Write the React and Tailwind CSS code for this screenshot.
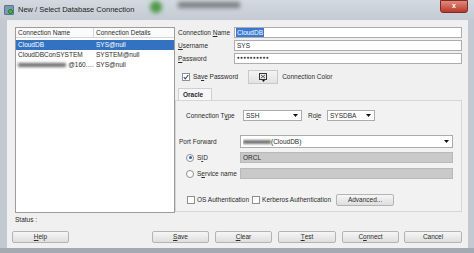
import React from "react";

const Btn = ({ children, className = "" }) => (
  <div
    className={`h-[12px] flex items-center justify-center border border-[#b4b4b4] rounded-[2px] bg-gradient-to-b from-[#f6f6f6] to-[#dedede] ${className}`}
  >
    {children}
  </div>
);

const Combo = ({ children, className = "" }) => (
  <div
    className={`flex items-center border border-[#a9abb0] bg-white pl-[2px] pr-[3px] ${className}`}
  >
    <span className="flex-1 truncate">{children}</span>
    <svg width="5" height="3" viewBox="0 0 5 3">
      <path d="M0 0h5L2.5 3z" fill="#111" />
    </svg>
  </div>
);

const Check = ({ checked }) => (
  <div className="w-[8px] h-[8px] border border-[#8f8f8f] bg-white flex items-center justify-center shrink-0">
    {checked && (
      <svg width="6" height="6" viewBox="0 0 6 6">
        <path d="M0.8 3.2L2.3 4.8L5.2 1" stroke="#2c4f86" strokeWidth="1.1" fill="none" />
      </svg>
    )}
  </div>
);

const Radio = ({ checked }) => (
  <div className="w-[8px] h-[8px] rounded-full border border-[#8f8f8f] bg-white flex items-center justify-center shrink-0">
    {checked && <div className="w-[3px] h-[3px] rounded-full bg-[#2f63b8]" />}
  </div>
);

export default function App() {
  return (
    <div
      className="w-[474px] h-[253px] bg-[#c2c9d1] flex flex-col overflow-hidden text-[6.5px] text-[#2b2b2b]"
      style={{ fontFamily: '"Liberation Sans", Arial, sans-serif' }}
    >
      {/* Title bar */}
      <div className="relative h-[20px] shrink-0 flex items-center bg-gradient-to-b from-[#d3d9e0] to-[#c4cbd3]">
        <div className="ml-[4px] w-[10px] h-[10px] rounded-[1px] bg-[#7d97b3] border border-[#5b7490] flex items-end justify-end">
          <div className="w-[5px] h-[5px] rounded-full bg-[#3bbf3b] border border-[#1d7a1d]" />
        </div>
        <span className="ml-[4px] text-[7.5px] text-[#1e1e1e]">New / Select Database Connection</span>
        <div className="absolute left-[150px] top-[1px] w-[12px] h-[12px] rounded-full bg-[#4f9a4a] blur-[2px]" />
        <div className="absolute left-[178px] top-[2px] w-[62px] h-[6px] bg-[#55595e] blur-[2px] opacity-70" />
        <div className="absolute right-[6px] top-0 w-[28px] h-[13px] rounded-b-[3px] bg-gradient-to-b from-[#e08a7e] to-[#b9362a] border border-[#7e2b24] flex items-center justify-center text-white text-[7px] font-bold">
          x
        </div>
      </div>

      {/* Client area */}
      <div className="ml-[7px] mr-[6px] h-[228px] bg-[#f0f0f0] flex flex-col pt-[7px]">
        <div className="flex h-[186px]">
          {/* Connection list */}
          <div className="ml-[8px] w-[160px] h-[186px] bg-white border border-[#9c9c9c] flex flex-col">
            <div className="flex h-[10px] border-b border-[#d5d5d5] bg-[#fbfbfb]">
              <div className="w-[78px] pl-[2px] border-r border-[#d5d5d5] flex items-center">Connection Name</div>
              <div className="flex-1 pl-[2px] flex items-center">Connection Details</div>
            </div>
            <div className="flex h-[10px] mt-[2px] bg-[#3371c1] text-white">
              <div className="w-[78px] pl-[2px] flex items-center">CloudDB</div>
              <div className="flex-1 pl-[2px] flex items-center">SYS@null</div>
            </div>
            <div className="flex h-[10px]">
              <div className="w-[78px] pl-[2px] flex items-center">CloudDBConSYSTEM</div>
              <div className="flex-1 pl-[2px] flex items-center">SYSTEM@null</div>
            </div>
            <div className="flex h-[10px]">
              <div className="w-[78px] pl-[2px] flex items-center">
                <span className="w-[49px] h-[4px] bg-[#6b6b6b] blur-[1.5px] mr-[2px]" />
                @160.…
              </div>
              <div className="flex-1 pl-[2px] flex items-center">SYS@null</div>
            </div>
          </div>

          {/* Details */}
          <div className="w-[287px] flex flex-col">
            <div className="flex items-center h-[11px]">
              <span className="pl-[3px] w-[59px]">Connection <u>N</u>ame</span>
              <div className="w-[228px] h-[11px] border border-[#abadb3] bg-white flex items-center pl-[1px]">
                <span className="bg-[#3a79d0] text-white px-[1px]">CloudDB</span>
              </div>
            </div>
            <div className="flex items-center h-[11px] mt-[2px]">
              <span className="pl-[3px] w-[59px]"><u>U</u>sername</span>
              <div className="w-[228px] h-[11px] border border-[#abadb3] bg-white flex items-center pl-[2px]">SYS</div>
            </div>
            <div className="flex items-center h-[11px] mt-[2px]">
              <span className="pl-[3px] w-[59px]"><u>P</u>assword</span>
              <div className="w-[228px] h-[11px] border border-[#abadb3] bg-white flex items-center pl-[2px] text-[4.5px] tracking-[0.5px]">
                ●●●●●●●●●●
              </div>
            </div>
            <div className="flex items-center h-[14px] mt-[6px]">
              <div className="ml-[7px]"><Check checked /></div>
              <span className="ml-[3px]">Sa<u>v</u>e Password</span>
              <div className="ml-[10px] w-[30px] h-[14px] border border-[#c9c9c9] bg-gradient-to-b from-[#f4f4f4] to-[#e2e2e2] flex items-center justify-center">
                <svg width="8" height="9" viewBox="0 0 8 9">
                  <rect x="0.5" y="0.5" width="7" height="6" fill="none" stroke="#333" />
                  <path d="M2 2l4 3M6 2l-4 3" stroke="#333" strokeWidth="0.8" />
                  <path d="M3 7h3l-1.5 2z" fill="#111" />
                </svg>
              </div>
              <span className="ml-[4px]">Connection Color</span>
            </div>

            {/* Tab */}
            <div className="mt-[4px] flex">
              <div className="ml-[3px] w-[34px] h-[12px] border border-b-0 border-[#cfcfcf] bg-[#f7f7f7] flex items-center pl-[4px] font-bold">
                Oracle
              </div>
            </div>
            <div className="h-[112px] border border-[#d6d6d6] bg-[#f2f2f2] flex flex-col">
              <div className="flex items-center h-[11px] mt-[9px]">
                <span className="ml-[10px] w-[57px]">Connection T<u>y</u>pe</span>
                <Combo className="w-[59px] h-[11px]">SSH</Combo>
                <span className="ml-[6px] w-[19px]">Ro<u>l</u>e</span>
                <Combo className="w-[48px] h-[11px]">SYSDBA</Combo>
              </div>
              <div className="flex items-center h-[13px] mt-[14px]">
                <span className="ml-[3px] w-[61px]">Port Forward</span>
                <Combo className="w-[213px] h-[13px]">
                  <span className="inline-block w-[28px] h-[4px] bg-[#777] blur-[1px] align-middle" />
                  (CloudDB)
                </Combo>
              </div>
              <div className="flex items-center h-[11px] mt-[4px]">
                <div className="ml-[10px]"><Radio checked /></div>
                <span className="ml-[3px] w-[43px]">S<u>I</u>D</span>
                <div className="w-[213px] h-[11px] border border-[#b8b8b8] bg-[#c9c9c9] flex items-center pl-[2px]">ORCL</div>
              </div>
              <div className="flex items-center h-[11px] mt-[5px]">
                <div className="ml-[10px]"><Radio /></div>
                <span className="ml-[3px] w-[43px]">S<u>e</u>rvice name</span>
                <div className="w-[213px] h-[11px] border border-[#b8b8b8] bg-[#c9c9c9]" />
              </div>
              <div className="flex items-center h-[11px] mt-[15px]">
                <div className="ml-[11px]"><Check /></div>
                <span className="ml-[2px]">OS Authentication</span>
                <div className="ml-[3px]"><Check /></div>
                <span className="ml-[2px]">Kerberos Authentication</span>
                <Btn className="ml-[5px] w-[58px] h-[11px]">Advanced...</Btn>
              </div>
            </div>
          </div>
        </div>

        <div className="h-[12px] flex items-center pl-[8px] mt-[1px]">Status :</div>

        <div className="flex mt-[5px]">
          <Btn className="ml-[5px] w-[57px]"><u>H</u>elp</Btn>
          <Btn className="ml-[83px] w-[57px]"><u>S</u>ave</Btn>
          <Btn className="ml-[6px] w-[57px]"><u>C</u>lear</Btn>
          <Btn className="ml-[6px] w-[58px]"><u>T</u>est</Btn>
          <Btn className="ml-[6px] w-[57px]">C<u>o</u>nnect</Btn>
          <Btn className="ml-[5px] w-[58px]">Cancel</Btn>
        </div>
      </div>
      <div className="flex-1 bg-[#a3aab2]" />
    </div>
  );
}
